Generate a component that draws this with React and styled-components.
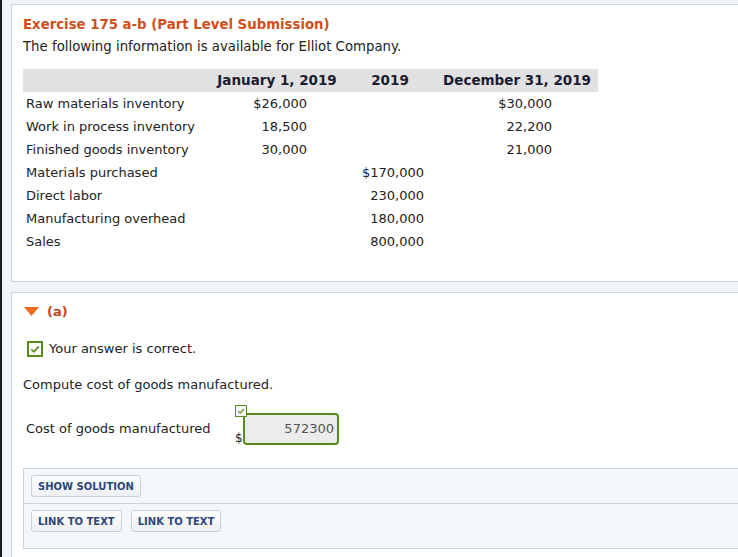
import React from "react";
import styled, { createGlobalStyle } from "styled-components";

const Global = createGlobalStyle`
  html, body { margin: 0; padding: 0; background: #f1f4f8; }
  body { font-family: "DejaVu Sans", Verdana, sans-serif; font-size: 13px; color: #222; overflow: hidden; }
`;

const Page = styled.div`
  min-height: 557px;
  border-left: 2px solid #1c1c1c;
  padding: 4px 0 0 9px;
  display: flex;
  flex-direction: column;
  gap: 10px;
  overflow: hidden;
`;

const Panel = styled.section`
  background: #fff;
  border: 1px solid #cfd5de;
  margin-right: -30px;
  padding: ${(p) => p.$pad};
  height: ${(p) => p.$h || "auto"};
  box-sizing: border-box;
`;

const Title = styled.h2`
  margin: 0;
  font-size: 13.3px;
  line-height: 17px;
  font-weight: bold;
  color: #d0501b;
`;

const Text = styled.p`
  margin: ${(p) => p.$m || "0"};
  font-size: ${(p) => p.$fs || "13px"};
  line-height: 17px;
  color: #222;
`;

const Table = styled.div`
  margin-top: 14px;
  width: 575px;
  display: grid;
  grid-template-columns: 187px 134px 92px 162px;
`;

const HeadCell = styled.div`
  background: #e1e1e1;
  height: 23px;
  line-height: 23px;
  font-weight: bold;
  font-size: 13.5px;
  color: #1b1d33;
  text-align: center;
  white-space: nowrap;
`;

const Cell = styled.div`
  height: 23px;
  line-height: 23px;
  white-space: nowrap;
  text-align: ${(p) => (p.$label ? "left" : "right")};
  padding: ${(p) => (p.$label ? "0 0 0 3px" : `0 ${p.$pr}px 0 0`)};
  color: #222;
`;

const PartHeader = styled.div`
  display: flex;
  align-items: center;
  gap: 8px;
  height: 17px;
  padding-left: 1px;
`;

const PartLabel = styled.span`
  font-weight: bold;
  color: #c4461a;
  font-size: 13px;
`;

const Correct = styled.div`
  display: flex;
  align-items: center;
  gap: 6px;
  margin: 20px 0 0 4px;
  height: 17px;
`;

const AnswerRow = styled.div`
  display: flex;
  align-items: flex-start;
  margin-top: 12px;
  height: 40px;
`;

const AnswerLabel = styled.span`
  width: 212px;
  padding-left: 3px;
  box-sizing: border-box;
  line-height: 17px;
  margin-top: 15px;
`;

const InputGroup = styled.div`
  position: relative;
  display: flex;
  align-items: flex-end;
  padding-top: 8px;
`;

const Dollar = styled.span`
  font-size: 12px;
  line-height: 12px;
  margin-bottom: 1px;
  width: 8px;
`;

const Input = styled.div`
  width: 96px;
  height: 32px;
  box-sizing: border-box;
  border: 2px solid #5b8a1d;
  border-radius: 4px;
  background: #ececec;
  color: #555;
  text-align: right;
  line-height: 28px;
  padding-right: 3px;
`;

const Badge = styled.span`
  position: absolute;
  left: 0;
  top: 0;
  width: 12px;
  height: 12px;
  display: flex;
`;

const ActionBox = styled.div`
  margin-top: 23px;
  background: #f4f7fa;
  border: 1px solid #cdd3dc;
`;

const ActionRow = styled.div`
  display: flex;
  gap: 9px;
  padding: ${(p) => p.$pad};
  & + & { border-top: 1px solid #cdd3dc; }
`;

const Button = styled.button`
  font-family: "DejaVu Sans", Verdana, sans-serif;
  font-size: 10px;
  font-weight: bold;
  color: #2d4677;
  height: 22px;
  padding: 0 6px;
  border: 1px solid #c9d0da;
  border-radius: 3px;
  background: linear-gradient(#ffffff, #eceff4);
  white-space: nowrap;
`;

const CheckBox = ({ size = 16, stroke = 2 }) => (
  <svg width={size} height={size} viewBox="0 0 16 16">
    <rect x={stroke / 2} y={stroke / 2} width={16 - stroke} height={16 - stroke} fill="#fff" stroke="#5b8a1d" strokeWidth={stroke} />
    <path d="M4.2 8.4 L6.9 10.8 L11.8 5.4" fill="none" stroke="#5b8a1d" strokeWidth="1.7" />
  </svg>
);

const rows = [
  ["Raw materials inventory", "$26,000", "", "$30,000"],
  ["Work in process inventory", "18,500", "", "22,200"],
  ["Finished goods inventory", "30,000", "", "21,000"],
  ["Materials purchased", "", "$170,000", ""],
  ["Direct labor", "", "230,000", ""],
  ["Manufacturing overhead", "", "180,000", ""],
  ["Sales", "", "800,000", ""],
];
const pads = [37, 12, 46];

export default function App() {
  return (
    <>
      <Global />
      <Page>
        <Panel $pad="11px 12px 0 11px" $h="278px">
          <Title>Exercise 175 a-b (Part Level Submission)</Title>
          <Text $m="5px 0 0" $fs="13.3px">The following information is available for Elliot Company.</Text>
          <Table>
            <HeadCell />
            <HeadCell>January 1, 2019</HeadCell>
            <HeadCell>2019</HeadCell>
            <HeadCell>December 31, 2019</HeadCell>
            {rows.map((r) =>
              r.map((v, i) => (
                <Cell key={r[0] + i} $label={i === 0} $pr={pads[i - 1]}>
                  {v}
                </Cell>
              ))
            )}
          </Table>
        </Panel>
        <Panel $pad="10px 12px 20px 11px">
          <PartHeader>
            <svg width="15" height="9" viewBox="0 0 15 9">
              <path d="M0 0 H15 L7.5 9 Z" fill="#f26b1d" />
            </svg>
            <PartLabel>(a)</PartLabel>
          </PartHeader>
          <Correct>
            <CheckBox />
            <span>Your answer is correct.</span>
          </Correct>
          <Text $m="19px 0 0">Compute cost of goods manufactured.</Text>
          <AnswerRow>
            <AnswerLabel>Cost of goods manufactured</AnswerLabel>
            <InputGroup>
              <Badge>
                <CheckBox size={12} stroke={1.4} />
              </Badge>
              <Dollar>$</Dollar>
              <Input>572300</Input>
            </InputGroup>
          </AnswerRow>
          <ActionBox>
            <ActionRow $pad="6px 7px 6px">
              <Button>SHOW SOLUTION</Button>
            </ActionRow>
            <ActionRow $pad="6px 7px 16px">
              <Button>LINK TO TEXT</Button>
              <Button>LINK TO TEXT</Button>
            </ActionRow>
          </ActionBox>
        </Panel>
      </Page>
    </>
  );
}
